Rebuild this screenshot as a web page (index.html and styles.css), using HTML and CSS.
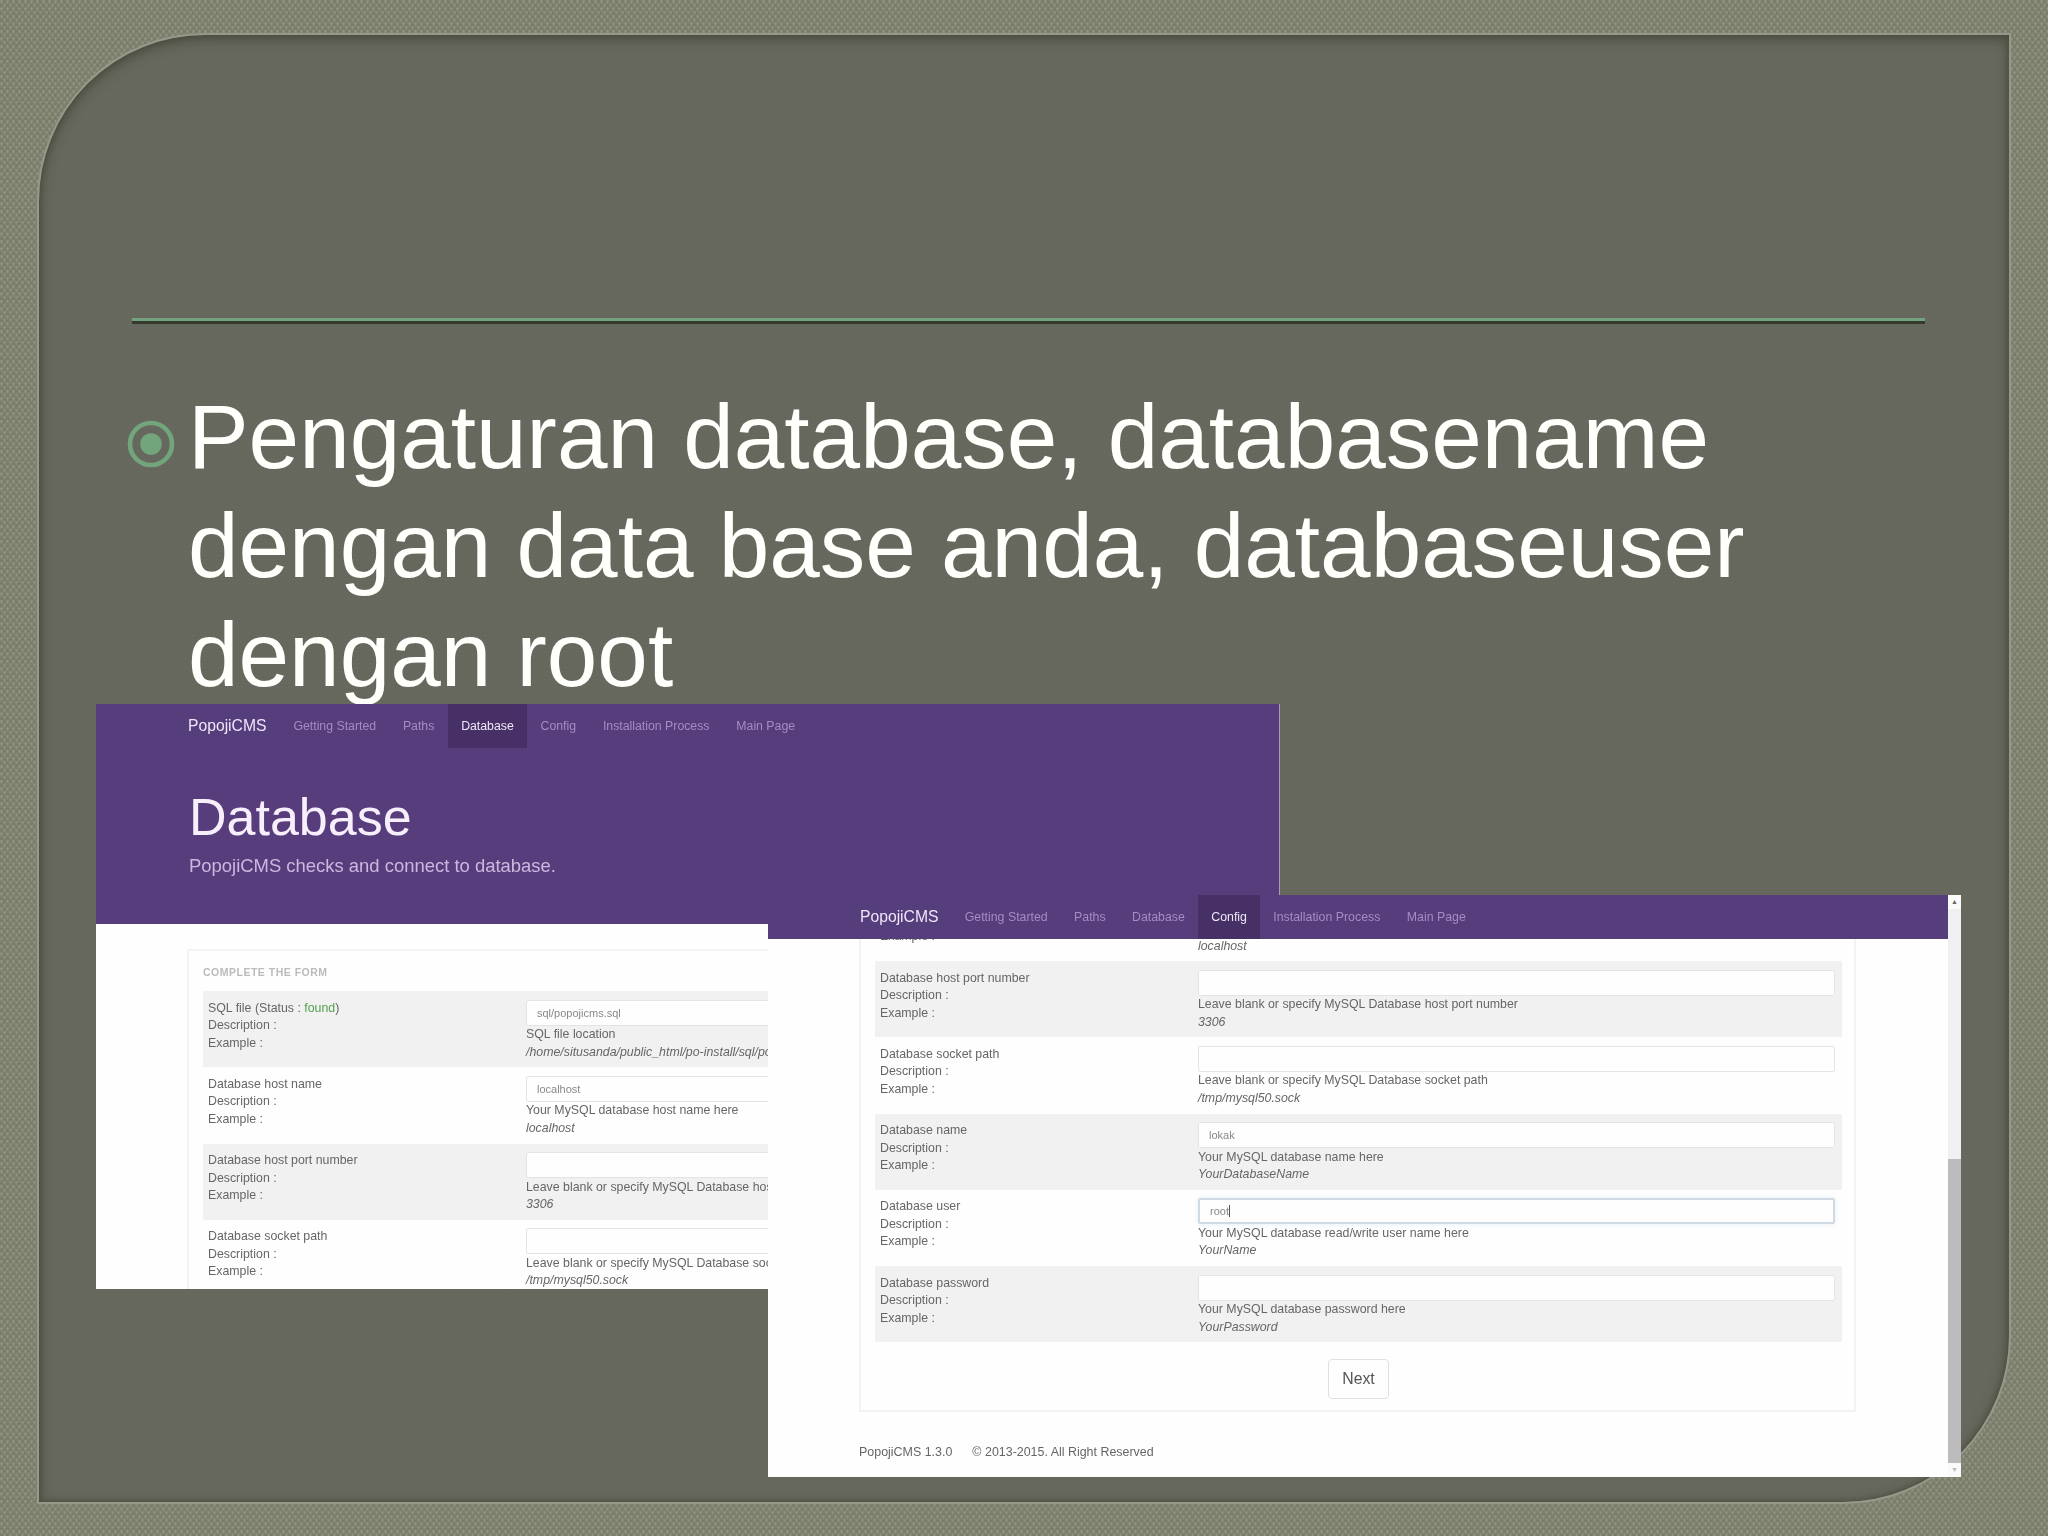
FILE: index.html
```html
<!DOCTYPE html>
<html lang="id">
<head>
<meta charset="utf-8">
<title>Pengaturan database</title>
<link rel="stylesheet" href="styles.css">
</head>
<body>
<main class="slide">
  <section class="board">
    <div class="rule"></div>
    <div class="point">
      <svg class="bullet" viewBox="0 0 48 48"><circle cx="24" cy="24" r="21" fill="none" stroke="#72a57c" stroke-width="4.6"/><circle cx="24" cy="24" r="10.8" fill="#72a57c"/></svg>
      <p class="point-text">Pengaturan database, databasename<br>dengan data base anda, databaseuser<br>dengan root</p>
    </div>
  </section>

  <section class="window window-database">
    <nav class="navbar">
      <span class="brand">PopojiCMS</span>
      <span class="link">Getting Started</span><span class="link">Paths</span><span class="link active">Database</span><span class="link">Config</span><span class="link">Installation Process</span><span class="link">Main Page</span>
    </nav>
    <header class="hero">
      <h1>Database</h1>
      <p>PopojiCMS checks and connect to database.</p>
    </header>
    <div class="form form-top">
      <h2>COMPLETE THE FORM</h2>
      <div class="row shaded"><div class="labels">SQL file (Status : <span class="found">found</span>)<br>Description :<br>Example :</div><div class="field"><div class="input">sql/popojicms.sql</div>SQL file location<br><i>/home/situsanda/public_html/po-install/sql/popojicms.sql</i></div></div>
      <div class="row"><div class="labels">Database host name<br>Description :<br>Example :</div><div class="field"><div class="input">localhost</div>Your MySQL database host name here<br><i>localhost</i></div></div>
      <div class="row shaded"><div class="labels">Database host port number<br>Description :<br>Example :</div><div class="field"><div class="input"></div>Leave blank or specify MySQL Database host port number<br><i>3306</i></div></div>
      <div class="row"><div class="labels">Database socket path<br>Description :<br>Example :</div><div class="field"><div class="input"></div>Leave blank or specify MySQL Database socket path<br><i>/tmp/mysql50.sock</i></div></div>
    </div>
  </section>

  <section class="window window-config">
    <div class="view">
      <nav class="navbar">
        <span class="brand">PopojiCMS</span>
        <span class="link">Getting Started</span><span class="link">Paths</span><span class="link">Database</span><span class="link active">Config</span><span class="link">Installation Process</span><span class="link">Main Page</span>
      </nav>
      <div class="form form-rest">
        <div class="row cut"><div class="labels">Example :</div><div class="field"><i>localhost</i></div></div>
        <div class="row shaded"><div class="labels">Database host port number<br>Description :<br>Example :</div><div class="field"><div class="input"></div>Leave blank or specify MySQL Database host port number<br><i>3306</i></div></div>
        <div class="row"><div class="labels">Database socket path<br>Description :<br>Example :</div><div class="field"><div class="input"></div>Leave blank or specify MySQL Database socket path<br><i>/tmp/mysql50.sock</i></div></div>
        <div class="row shaded"><div class="labels">Database name<br>Description :<br>Example :</div><div class="field"><div class="input">lokak</div>Your MySQL database name here<br><i>YourDatabaseName</i></div></div>
        <div class="row"><div class="labels">Database user<br>Description :<br>Example :</div><div class="field"><div class="input focus">root<span class="caret"></span></div>Your MySQL database read/write user name here<br><i>YourName</i></div></div>
        <div class="row shaded"><div class="labels">Database password<br>Description :<br>Example :</div><div class="field"><div class="input"></div>Your MySQL database password here<br><i>YourPassword</i></div></div>
        <div class="actions"><span class="next">Next</span></div>
      </div>
      <footer class="foot"><span>PopojiCMS 1.3.0</span><span>© 2013-2015. All Right Reserved</span></footer>
    </div>
    <div class="scrollbar"><span class="arrow">▲</span><span class="thumb"></span><span class="arrow down">▼</span></div>
  </section>
</main>
</body>
</html>
```
FILE: styles.css
```css
* { box-sizing: border-box; }
body { margin: 0; font-family: "Liberation Sans", Arial, sans-serif; }
.slide {
  position: relative; width: 2048px; height: 1536px; overflow: hidden;
  padding: 33px 37px 32px 37px;
  background-color: #7f816f;
  background-image:
    radial-gradient(circle at 1.5px 1.5px, #96988a 0.5px, transparent 1.9px),
    radial-gradient(circle at 4.5px 5.2px, #949684 0.5px, transparent 1.9px),
    repeating-linear-gradient(0deg, rgba(70,72,55,.14) 0 1px, transparent 1px 3.75px);
  background-size: 6px 7.5px, 6px 7.5px, auto;
}
.board {
  height: 1471px; border: 2px solid #96998a;
  border-radius: 168px 0 168px 0;
  padding: 283px 85px 0 93px;
  background-color: #67685e;
  background-image:
    repeating-linear-gradient(0deg, rgba(90,92,78,.1) 0 1px, transparent 1px 4px),
    repeating-linear-gradient(90deg, rgba(90,92,78,.08) 0 1px, transparent 1px 4px);
  box-shadow: inset 0 3px 13px #46483a, inset 0 0 5px #4d4f3f;
}
.rule { height: 6px; margin-right: -1px; background: linear-gradient(#74a27f 0 50%, #343a2e 50%); }
.point { display: flex; margin-top: 58px; }
.bullet { width: 48px; height: 48px; margin: 38px 13px 0 -5px; flex: none; }
.point-text { margin: 0; color: #fffffb; font-size: 90.9px; line-height: 109px; white-space: nowrap; }

.window { position: absolute; overflow: hidden; background: #fefefe; color: #666; font-size: 12.35px; line-height: 17.55px; }
.window-database { left: 96px; top: 704px; width: 1184px; height: 585px; }
.window-config { left: 768px; top: 895px; width: 1193px; height: 582px; display: flex; }
.view { width: 1180px; }
.navbar { position: relative; z-index: 1; display: flex; height: 44px; padding-left: 92px; background: #563d7c; color: #a58cc4; line-height: 44px; white-space: nowrap; }
.brand { width: 91.5px; color: #f0e6fa; font-size: 15.7px; }
.link { padding: 0 13.2px; }
.link.active { background: #463066; color: #efe6f8; }
.window-database .navbar { border-right: 1px solid #a99bb9; font-size: 12.3px; }
.window-database .brand { width: 92px; }
.window-database .link { padding: 0 13.4px; }
.hero { height: 176px; padding: 41px 0 0 93px; background: #583d7c; border-right: 1px solid #a99bb9; }
.hero h1 { margin: 0; font-weight: 400; font-size: 52px; line-height: 56px; color: #f8effd; }
.hero p { margin: 8px 0 0; font-size: 18.45px; line-height: 26px; color: #cab8df; }
.form { border: 2px solid #f4f3f4; width: 997px; padding: 0 12px 0 14px; }
.form-top { margin: 25px 0 0 91px; height: 500px; }
.form h2 { margin: 14px 0 12px; font-size: 10.5px; line-height: 14px; letter-spacing: .5px; color: #bbb; }
.form-rest { margin-left: 91px; border-top: 0; height: 473px; }
.row { display: flex; height: 76.3px; padding: 8.5px 7px 0 5px; white-space: nowrap; }
.shaded { background: #f2f1f2; }
.labels { width: 318px; }
.field { flex: 1; }
.input { height: 26px; margin-bottom: .5px; padding: 0 10px; border: 1px solid #e4e3e5; background: #fefefe; font-size: 11px; line-height: 24px; color: #888; border-radius: 2px; }
.focus { border: 2px solid #cfdae4; line-height: 22px; box-shadow: 0 0 5px #e4edf5; }
.caret { display: inline-block; width: 1px; height: 12px; background: #555; vertical-align: -2px; }
.found { color: #55a04f; }
.cut { height: 22px; padding-top: 0; }
.cut .labels { margin-top: -11px; }
.cut .field { margin-top: -1px; }
.actions { display: flex; justify-content: center; padding-top: 17px; }
.next { width: 61px; height: 40px; border: 1px solid #e0dfe2; border-radius: 4px; text-align: center; font-size: 15.8px; line-height: 38px; color: #555; }
.foot { display: flex; gap: 20px; margin: 32px 0 0 91px; font-size: 12.45px; }
.scrollbar { width: 13px; display: flex; flex-direction: column; background: #f0eff1; }
.arrow { height: 14px; font-size: 7px; line-height: 14px; text-align: center; background: #fafafa; color: #666; }
.down { color: #bbb; }
.thumb { height: 304px; margin-top: 250px; background: #bdbbbd; }
.brand, .link, .hero h1, .hero p, .form h2, .labels, .field, .next, .foot { filter: blur(.5px); }
```
